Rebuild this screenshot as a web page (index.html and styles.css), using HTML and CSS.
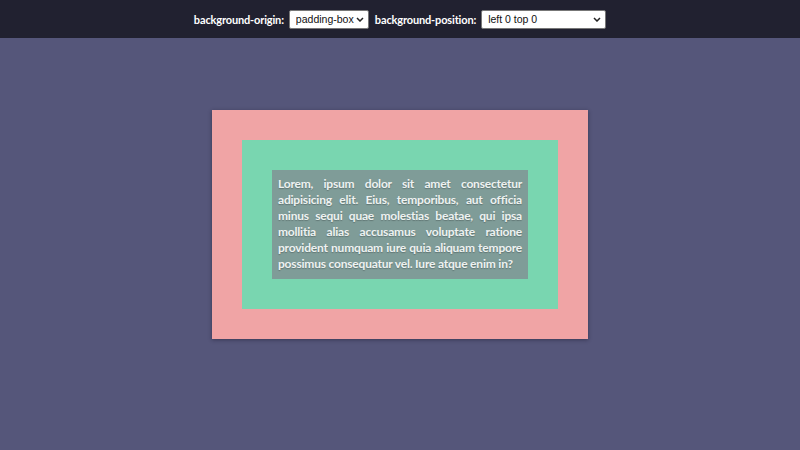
FILE: index.html
```html
<!DOCTYPE html>
<html lang="en">
<head>
<meta charset="utf-8">
<title>background-origin</title>
<link rel="stylesheet" href="styles.css">
</head>
<body>
<header class="toolbar">
  <label class="field">
    <span class="field-label">background-origin:</span>
    <select class="field-select origin">
      <option>padding-box</option>
      <option>border-box</option>
      <option>content-box</option>
    </select>
  </label>
  <label class="field">
    <span class="field-label">background-position:</span>
    <select class="field-select position">
      <option>left 0 top 0</option>
      <option>center</option>
      <option>right 0 bottom 0</option>
    </select>
  </label>
</header>
<main class="stage">
  <div class="box">
    <p class="box-text">Lorem, ipsum dolor sit amet consectetur adipisicing elit. Eius, temporibus, aut officia minus sequi quae molestias beatae, qui ipsa mollitia alias accusamus voluptate ratione provident numquam iure quia aliquam tempore possimus consequatur vel. Iure atque enim in?</p>
  </div>
</main>
</body>
</html>
```
FILE: styles.css
```css
* {
  box-sizing: border-box;
}

html, body {
  margin: 0;
  height: 100%;
}

body {
  background: #55567a;
  font-family: Lato, "Noto Sans", sans-serif;
}

.toolbar {
  height: 38px;
  background: #212130;
  display: flex;
  align-items: center;
  justify-content: center;
  gap: 6px;
}

.field {
  display: flex;
  align-items: center;
  gap: 5px;
}

.field-label {
  color: #ffffff;
  font-size: 11px;
  font-weight: 700;
  letter-spacing: -0.15px;
}

/* native look replaced so the label and chevron sit where intended */
.field-select {
  appearance: none;
  -webkit-appearance: none;
  height: 19px;
  font-family: "Liberation Sans", Arial, sans-serif;
  font-size: 10.5px;
  color: #111;
  background-color: #fff;
  background-image: url("data:image/svg+xml,%3Csvg xmlns='http://www.w3.org/2000/svg' width='8' height='5' viewBox='0 0 8 5'%3E%3Cpath d='M1 1l3 3 3-3' fill='none' stroke='%23222' stroke-width='1.5'/%3E%3C/svg%3E");
  background-repeat: no-repeat;
  background-position: right 4px center;
  border: 1px solid #777;
  border-radius: 2px;
  padding: 0 12px 0 6px;
}

.origin {
  width: 80px;
}

.position {
  width: 125px;
}

.stage {
  display: flex;
  justify-content: center;
  padding-top: 72px;
}

.box {
  width: 376px;
  border: 30px solid #f0a4a5;
  background: #79d6b0;
  padding: 30px;
  box-shadow: 0 1px 4px rgba(20, 20, 40, 0.45);
}

.box-text {
  margin: 0;
  background: #7f9c98;
  color: #eef2f1;
  font-size: 12px;
  font-weight: 700;
  letter-spacing: -0.2px;
  line-height: 16px;
  text-align: justify;
  padding: 6px 6px 7px;
  text-shadow: 0 1px 1px rgba(40, 50, 50, 0.35);
}
```
